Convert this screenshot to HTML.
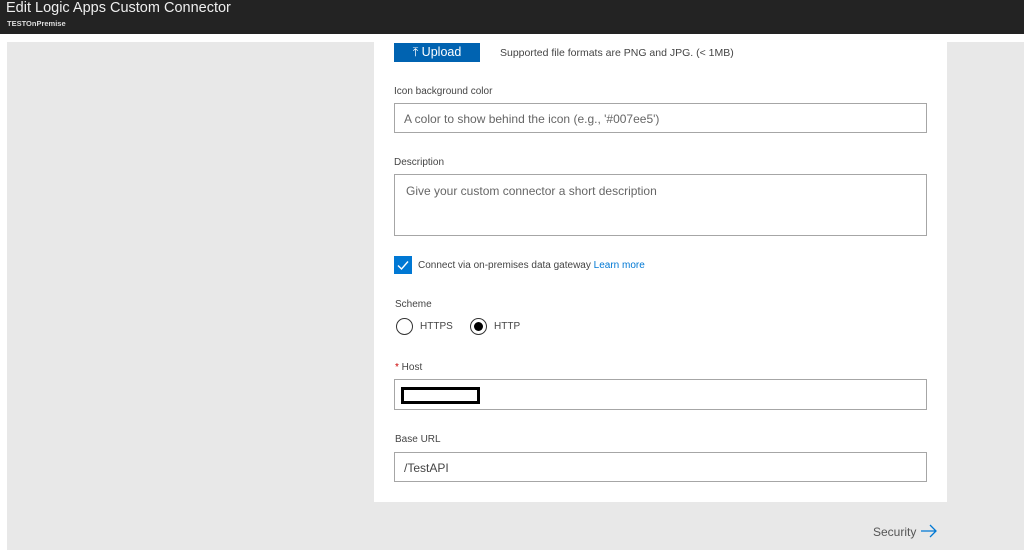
<!DOCTYPE html>
<html><head><style>
*{margin:0;padding:0;box-sizing:border-box}
body{width:1024px;height:550px;overflow:hidden;background:#fff;font-family:"Liberation Sans",sans-serif;color:#333;position:relative}
.hdr{position:absolute;left:0;top:0;width:1024px;height:34px;background:#232323;color:#fff}
.hdr .t{position:absolute;left:6px;top:0px;font-size:14.5px;color:#eee}
.hdr .s{position:absolute;left:7px;top:19px;font-size:7.5px;font-weight:bold;color:#ddd}
.gray{position:absolute;left:7px;top:42px;width:1017px;height:508px;background:#e8e8e8}
.panel{position:absolute;left:374px;top:34px;width:573px;height:468px;background:#fff}
.a{position:absolute}
.lbl{font-size:10px;color:#444}
.inp{position:absolute;left:394px;width:533px;border:1px solid #a6a6a6;background:#fff;font-size:12px;color:#666;padding-left:9px}
</style></head><body>
<div class="hdr"><div class="t">Edit Logic Apps Custom Connector</div><div class="s">TESTOnPremise</div></div>
<div class="gray"></div>
<div class="panel"></div>
<div class="a" style="left:394px;top:43px;width:86px;height:19px;background:#0063b1;color:#fff;font-size:12.5px;text-align:center;line-height:19px">⤒ Upload</div>
<div class="a" style="left:500px;top:47px;font-size:10.5px;color:#444">Supported file formats are PNG and JPG. (&lt; 1MB)</div>
<div class="a lbl" style="left:394px;top:86px">Icon background color</div>
<div class="inp" style="top:103px;height:30px;line-height:30px">A color to show behind the icon (e.g., '#007ee5')</div>
<div class="a lbl" style="left:394px;top:157px">Description</div>
<div class="inp" style="top:174px;height:62px;padding-top:9px;padding-left:11px">Give your custom connector a short description</div>
<div class="a" style="left:394px;top:256px;width:18px;height:18px;background:#0078d4"><svg width="18" height="18"><path d="M4 9.5l3.5 3.5L14 5.5" stroke="#fff" stroke-width="1.4" fill="none"/></svg></div>
<div class="a" style="left:418px;top:260px;font-size:10px;color:#444">Connect via on-premises data gateway <span style="color:#0078d4">Learn more</span></div>
<div class="a lbl" style="left:395px;top:299px">Scheme</div>
<div class="a" style="left:396px;top:318px;width:17px;height:17px;border:1px solid #333;border-radius:50%"></div>
<div class="a lbl" style="left:420px;top:321px">HTTPS</div>
<div class="a" style="left:470px;top:318px;width:17px;height:17px;border:1px solid #333;border-radius:50%"><div style="position:absolute;left:3px;top:3px;width:9px;height:9px;background:#000;border-radius:50%"></div></div>
<div class="a lbl" style="left:494px;top:321px">HTTP</div>
<div class="a lbl" style="left:395px;top:362px"><span style="color:#c00">*</span> Host</div>
<div class="inp" style="top:379px;height:31px"></div>
<div class="a" style="left:401px;top:387px;width:79px;height:17px;border:3px solid #000"></div>
<div class="a lbl" style="left:395px;top:434px">Base URL</div>
<div class="inp" style="top:452px;height:30px;line-height:30px;color:#444">/TestAPI</div>
<div class="a" style="left:873px;top:525px;font-size:12px;color:#555">Security</div>
<svg class="a" style="left:920px;top:523px" width="18" height="16"><path d="M1 8h15M10 2l6 6-6 6" stroke="#0078d4" stroke-width="1.3" fill="none"/></svg>
</body></html>
